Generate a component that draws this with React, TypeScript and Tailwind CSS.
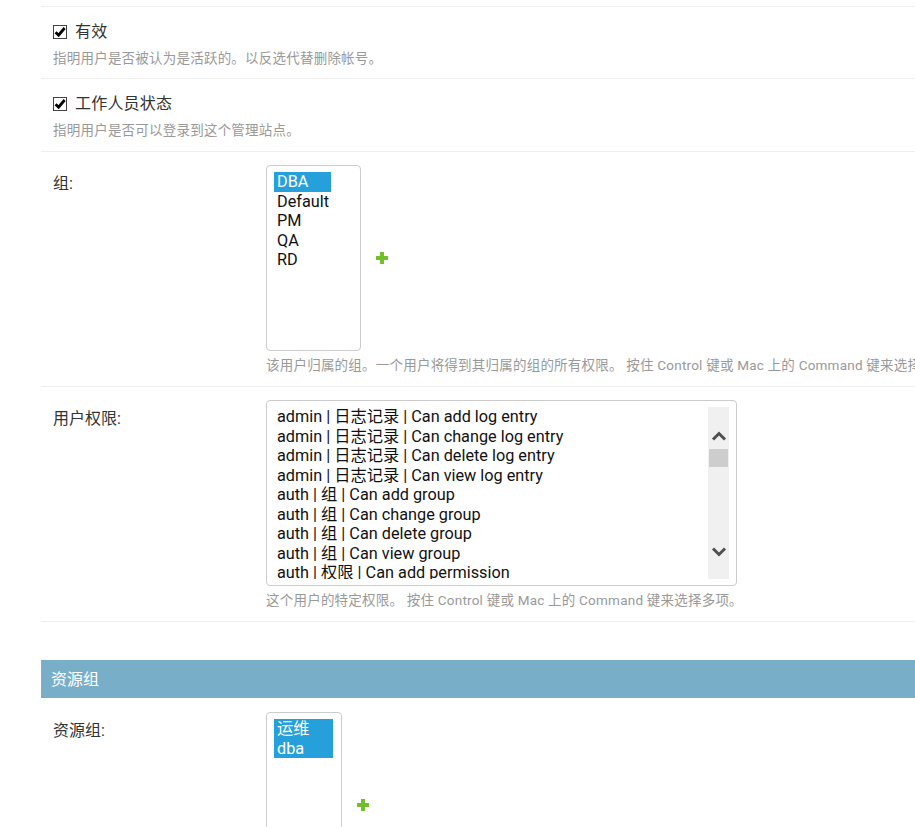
import React from "react";

const font = { fontFamily: 'Roboto, "Noto Sans CJK SC", sans-serif' };

function CheckBox() {
  return (
    <span className="flex h-[14px] w-[14px] shrink-0 items-center justify-center border border-[#444] bg-white">
      <svg width="12" height="12" viewBox="0 0 12 12">
        <path d="M1.6 6.2 L4.6 9.2 L10.6 2" fill="none" stroke="#000" strokeWidth="2.8" />
      </svg>
    </span>
  );
}

function Plus() {
  return (
    <svg width="12" height="12" viewBox="0 0 12 12" className="shrink-0">
      <rect x="4" y="0" width="4" height="12" fill="#70bf2b" />
      <rect x="0" y="4" width="12" height="4" fill="#70bf2b" />
    </svg>
  );
}

function CheckRow({ label, help, extra }: { label: string; help: string; extra?: boolean }) {
  return (
    <div className={`border-b border-[#eee] px-3 pt-[13px] ${extra ? "pb-[12px]" : "pb-[11px]"}`}>
      <div className="flex h-[24px] items-center gap-[8px]">
        <CheckBox />
        <span className="text-[16px] tracking-[0.2px] text-[#333]">{label}</span>
      </div>
      <p className="mt-[5px] text-[13.5px] leading-[18px] tracking-[0.22px] text-[#999]">{help}</p>
    </div>
  );
}

const permissions = [
  "admin | 日志记录 | Can add log entry",
  "admin | 日志记录 | Can change log entry",
  "admin | 日志记录 | Can delete log entry",
  "admin | 日志记录 | Can view log entry",
  "auth | 组 | Can add group",
  "auth | 组 | Can change group",
  "auth | 组 | Can delete group",
  "auth | 组 | Can view group",
  "auth | 权限 | Can add permission",
  "auth | 权限 | Can change permission",
];

export default function App() {
  return (
    <div className="h-[827px] w-full overflow-hidden bg-white" style={font}>
      <div className="pl-[41px]">
        <div className="h-[7px] border-b border-[#eee]" />

        <CheckRow label="有效" help="指明用户是否被认为是活跃的。以反选代替删除帐号。" />
        <CheckRow label="工作人员状态" help="指明用户是否可以登录到这个管理站点。" extra />

        {/* 组 */}
        <div className="flex border-b border-[#eee] px-3 pt-[13px] pb-[12px]">
          <label className="w-[213px] shrink-0 pt-[7px] text-[16px] leading-[24px] text-[#333]">组:</label>
          <div>
            <div className="flex items-center gap-[15px]">
              <div className="h-[186px] w-[95px] rounded-[4px] border border-[#ccc] px-[7px] py-[6px] text-[16.25px] leading-[19.5px] text-[#111]">
                <div className="w-[57px] bg-[#26a0da] pl-[3px] text-white">DBA</div>
                <div className="pl-[3px]">Default</div>
                <div className="pl-[3px]">PM</div>
                <div className="pl-[3px]">QA</div>
                <div className="pl-[3px]">RD</div>
              </div>
              <Plus />
            </div>
            <p className="mt-[5px] whitespace-nowrap text-[13.5px] leading-[18px] tracking-[0.22px] text-[#999]">
              该用户归属的组。一个用户将得到其归属的组的所有权限。 按住 Control 键或 Mac 上的 Command 键来选择多项。
            </p>
          </div>
        </div>

        {/* 用户权限 */}
        <div className="flex border-b border-[#eee] px-3 pt-[13px] pb-[12px]">
          <label className="w-[213px] shrink-0 pt-[7px] text-[16px] leading-[24px] text-[#333]">用户权限:</label>
          <div>
            <div className="flex h-[186px] w-[471px] rounded-[4px] border border-[#ccc] py-[6px] pr-[7px] pl-[7px]">
              <div className="flex-1 overflow-hidden pl-[3px] text-[16.25px] leading-[19.5px] whitespace-nowrap text-[#111]">
                {permissions.map((p) => (
                  <div key={p}>{p}</div>
                ))}
              </div>
              <div className="flex w-[21px] flex-col items-center bg-[#f0f0f0]">
                <svg width="16" height="10" viewBox="0 0 16 10" className="mt-[24px]">
                  <polyline points="2,8.5 8,2.5 14,8.5" fill="none" stroke="#505050" strokeWidth="3" />
                </svg>
                <div className="mt-[8px] h-[18px] w-[19px] bg-[#cdcdcd]" />
                <div className="flex-1" />
                <svg width="16" height="10" viewBox="0 0 16 10" className="mb-[22px]">
                  <polyline points="2,1.5 8,7.5 14,1.5" fill="none" stroke="#505050" strokeWidth="3" />
                </svg>
              </div>
            </div>
            <p className="mt-[5px] whitespace-nowrap text-[13.5px] leading-[18px] tracking-[0.22px] text-[#999]">
              这个用户的特定权限。 按住 Control 键或 Mac 上的 Command 键来选择多项。
            </p>
          </div>
        </div>

        {/* 资源组 */}
        <h2 className="mt-[38px] h-[38px] bg-[#79aec8] pl-[10px] text-[16px] leading-[40px] text-white">资源组</h2>
        <div className="flex px-3 pt-[14px]">
          <label className="w-[213px] shrink-0 pt-[7px] text-[16px] leading-[24px] text-[#333]">资源组:</label>
          <div className="flex items-center gap-[15px]">
            <div className="h-[186px] w-[76px] rounded-[4px] border border-[#ccc] px-[7px] py-[6px] text-[16.25px] leading-[19.5px] text-[#111]">
              <div className="w-[59px] bg-[#26a0da] pl-[3px] text-white">
                <div>运维</div>
                <div>dba</div>
              </div>
            </div>
            <Plus />
          </div>
        </div>
      </div>
    </div>
  );
}
